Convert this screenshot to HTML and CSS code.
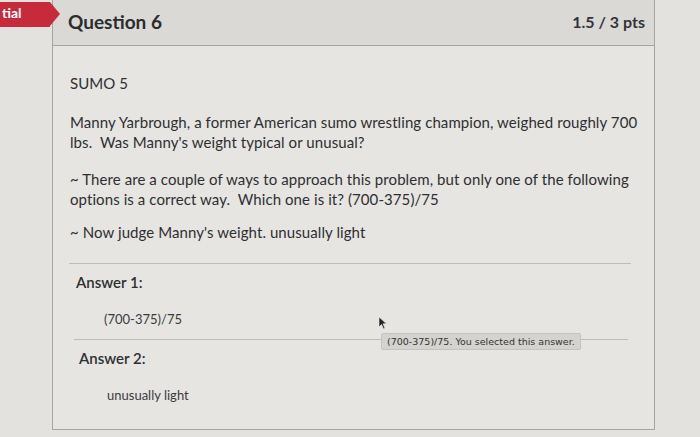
FILE: index.html
```html
<!DOCTYPE html>
<html>
<head>
<meta charset="utf-8">
<link rel="stylesheet" href="styles.css">
</head>
<body>
<div class="page">
  <div class="badge">tial</div>
  <div class="card">
    <div class="header">
      <span class="qname">Question 6</span>
      <span class="pts">1.5 / 3 pts</span>
    </div>
    <div class="body">
      <p class="p sumo">SUMO 5</p>
      <p class="p manny">Manny Yarbrough, a former American sumo wrestling champion, weighed roughly 700 lbs.&nbsp; Was Manny's weight typical or unusual?</p>
      <p class="p ways">~ There are a couple of ways to approach this problem, but only one of the following options is a correct way.&nbsp; Which one is it? (700-375)/75</p>
      <p class="p judge">~ Now judge Manny's weight. unusually light</p>
    </div>
    <div class="sep first"></div>
    <div class="answer">
      <div class="alabel">Answer 1:</div>
      <div class="aval">(700-375)/75</div>
    </div>
    <div class="sep second"></div>
    <div class="answer">
      <div class="alabel a2">Answer 2:</div>
      <div class="aval v2">unusually light</div>
    </div>
    <div class="tooltip">(700-375)/75. You selected this answer.</div>
    <svg class="cursor" width="10" height="14" viewBox="0 0 10 14"><path d="M1 1 L1 11 L3.5 8.5 L5.5 13 L7 12.3 L5 7.8 L8.5 7.8 Z" fill="#222" stroke="#eee" stroke-width="0.6"/></svg>
  </div>
</div>
</body>
</html>
```

FILE: styles.css
```css
html, body {
  margin: 0;
  padding: 0;
}
body {
  background: #e3e2df;
  width: 700px;
  height: 437px;
  overflow: hidden;
  font-family: Lato, "Open Sans", sans-serif;
  color: #2e2f31;
}
.page {
  position: relative;
  height: 437px;
}
.badge {
  position: absolute;
  left: 0;
  top: 2px;
  width: 50px;
  height: 25px;
  background: #c62a3b;
  color: #fff;
  font-weight: 700;
  font-size: 14px;
  line-height: 22px;
  padding-left: 2px;
  box-sizing: border-box;
  z-index: 2;
}
.badge::after {
  content: "";
  position: absolute;
  right: -10px;
  top: 0;
  border-left: 10px solid #c62a3b;
  border-top: 12.5px solid transparent;
  border-bottom: 12.5px solid transparent;
}
.card {
  position: relative;
  margin-left: 52px;
  width: 603px;
  height: 430px;
  border: 1px solid #a6a5a2;
  border-top: none;
  box-sizing: border-box;
  background: #e6e5e2;
}
.header {
  height: 46px;
  background: #dad9d6;
  border-bottom: 1px solid #a6a5a2;
  box-sizing: border-box;
  display: flex;
  align-items: center;
  justify-content: space-between;
  padding: 0 9px 0 15px;
}
.qname {
  font-size: 19px;
  font-weight: 700;
  color: #2b2c2e;
  margin-top: -3px;
}
.pts {
  font-size: 16px;
  font-weight: 700;
  color: #333436;
  margin-top: -3px;
}
.body {
  padding: 27px 10px 0 17px;
}
.p {
  margin: 0;
  font-size: 15px;
  line-height: 20px;
  letter-spacing: 0.08px;
}
.manny { margin-top: 19px; }
.ways { margin-top: 17px; }
.judge { margin-top: 13px; }
.sep {
  height: 1px;
  background: #bdbcb9;
}
.sep.first {
  margin: 21px 23px 0 16px;
}
.sep.second {
  margin: 11px 26px 0 21px;
}
.answer {
  padding-top: 8px;
}
.alabel {
  font-size: 15px;
  font-weight: 600;
  line-height: 20px;
  padding-left: 23px;
}
.alabel.a2 { padding-left: 26px; }
.aval {
  font-size: 13px;
  line-height: 18px;
  padding-left: 51px;
  margin-top: 18px;
  color: #3a3b3d;
}
.aval.v2 { padding-left: 54px; margin-top: 18px; }
.tooltip {
  position: absolute;
  left: 328px;
  top: 333px;
  height: 17px;
  padding: 0 5px;
  background: #d4d3d0;
  border: 1px solid #c4c3c0;
  border-radius: 2px;
  font-family: "DejaVu Sans", "Liberation Sans", sans-serif;
  font-size: 9.5px;
  line-height: 16px;
  color: #333;
  box-sizing: border-box;
}
.cursor {
  position: absolute;
  left: 325px;
  top: 316px;
}
```
